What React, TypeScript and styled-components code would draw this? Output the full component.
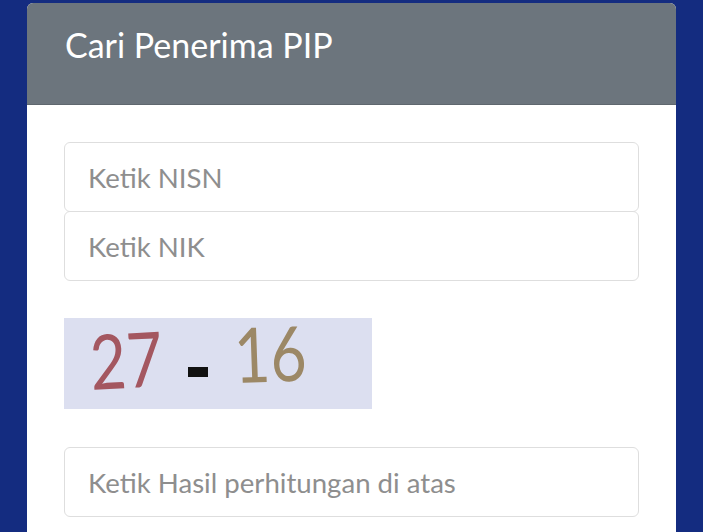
import React from "react"
import styled, { createGlobalStyle } from "styled-components"

const GlobalStyle = createGlobalStyle`
  html, body {
    margin: 0;
    padding: 0;
    background: #142c80;
    font-family: Lato, "Liberation Sans", sans-serif;
  }
`

const App: React.FC = () => {
  return (
    <Page>
      <GlobalStyle />
      <Card>
        <Header>
          <Title>Cari Penerima PIP</Title>
        </Header>
        <Body>
          <InputGroup>
            <Field placeholder="Ketik NISN" />
            <Field placeholder="Ketik NIK" />
          </InputGroup>
          <Captcha>
            <Operand tone="#a45760" lift={3} tilt={-3}>
              27
            </Operand>
            <Minus />
            <Operand tone="#9c8866" lift={10} tilt={-2}>
              16
            </Operand>
          </Captcha>
          <Field placeholder="Ketik Hasil perhitungan di atas" />
        </Body>
      </Card>
    </Page>
  )
}

export default App

const Page = styled.div`
  min-height: 532px;
  padding: 3px 27px 0 27px;
  box-sizing: border-box;
`

const Card = styled.div`
  background: #ffffff;
  border-radius: 6px 6px 0 0;
  overflow: hidden;
  min-height: 529px;
`

const Header = styled.div`
  background: #6c757d;
  height: 102px;
  box-sizing: border-box;
  padding: 20px 38px 0;
  border-bottom: 1px solid #5f676e;
`

const Title = styled.h1`
  margin: 0;
  color: #ffffff;
  font-family: Lato, "Liberation Sans", sans-serif;
  font-weight: 400;
  font-size: 34px;
  line-height: 44px;
`

const Body = styled.div`
  padding: 37px 37px 0;
  display: flex;
  flex-direction: column;
`

const InputGroup = styled.div`
  display: flex;
  flex-direction: column;
  & > input + input {
    margin-top: -1px;
  }
`

const Field = styled.input`
  display: block;
  width: 100%;
  height: 70px;
  box-sizing: border-box;
  border: 1px solid #dedede;
  border-radius: 6px;
  padding: 0 23px;
  font-family: Lato, "Liberation Sans", sans-serif;
  font-size: 27.6px;
  color: #333;
  background: #fff;
  outline: none;

  &::placeholder {
    color: #8e8e8e;
  }
`

const Captcha = styled.div`
  width: 308px;
  height: 91px;
  margin: 37px 0 38px;
  padding-left: 26px;
  box-sizing: border-box;
  background: #dcdff0;
  display: flex;
  align-items: flex-start;
`

const Operand = styled.span<{ tone: string; lift: number; tilt: number }>`
  display: block;
  width: 72px;
  font-family: Lato, "Liberation Sans", sans-serif;
  font-size: 76px;
  line-height: 91px;
  white-space: nowrap;
  color: ${props => props.tone};
  transform-origin: left center;
  transform: translateY(-${props => props.lift}px) rotate(${props => props.tilt}deg)
    scaleX(0.82);
`

const Minus = styled.span`
  display: block;
  width: 20px;
  height: 10px;
  margin: 49px 26px 0 26px;
  background: #111;
`
